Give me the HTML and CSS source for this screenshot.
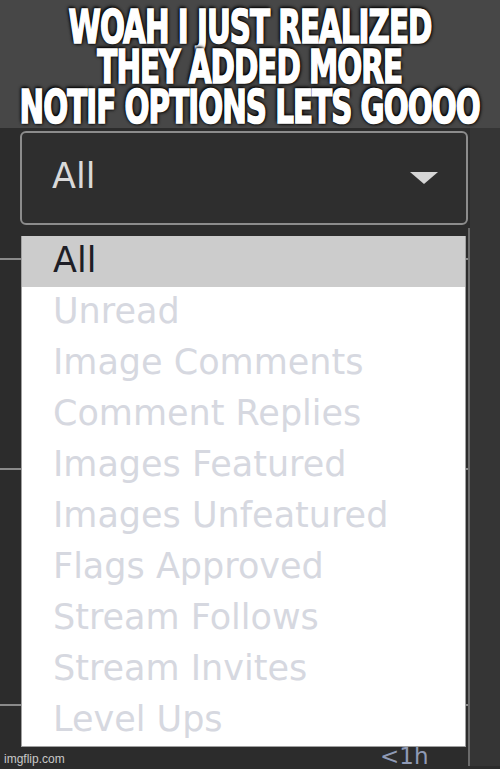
FILE: index.html
```html
<!DOCTYPE html>
<html lang="en">
<head>
    <meta charset="UTF-8" />
    <title>Notifications</title>
    <link rel="stylesheet" href="styles.css">
</head>
<body>
<header class="caption">
    <div class="caption-line"><span>WOAH I JUST REALIZED</span></div>
    <div class="caption-line"><span>THEY ADDED MORE</span></div>
    <div class="caption-line"><span>NOTIF OPTIONS LETS GOOOO</span></div>
</header>

<main class="page">
    <div class="filter-wrap">
        <div class="filter">
            <span class="filter-value">All</span>
            <svg class="filter-arrow" width="28" height="12" viewBox="0 0 28 12">
                <path d="M0 0 L28 0 L14 12 Z" fill="#d6d6d6"/>
            </svg>
        </div>
    </div>

    <div class="feed">
        <div class="feed-row" style="height:30px"></div>
        <div class="feed-row" style="height:208px"></div>
        <div class="feed-row" style="height:234px"></div>
        <div class="feed-row last">
            <span class="feed-time">&lt;1h</span>
        </div>
    </div>

    <ul class="menu">
        <li class="selected">All</li>
        <li>Unread</li>
        <li>Image Comments</li>
        <li>Comment Replies</li>
        <li>Images Featured</li>
        <li>Images Unfeatured</li>
        <li>Flags Approved</li>
        <li>Stream Follows</li>
        <li>Stream Invites</li>
        <li>Level Ups</li>
    </ul>
</main>

<div class="watermark">imgflip.com</div>
</body>
</html>
```

FILE: styles.css
```css
body {
    margin: 0;
    background: #2c2c2c;
    font-family: "DejaVu Sans", sans-serif;
    width: 500px;
    height: 769px;
    overflow: hidden;
    position: relative;
}

.caption {
    background: #474747;
    height: 128px;
    padding-top: 6px;
    box-sizing: border-box;
    font-family: "DejaVu Sans Condensed", "DejaVu Sans", sans-serif;
    font-stretch: condensed;
    font-weight: bold;
    font-size: 34px;
    letter-spacing: -1px;
    line-height: 40px;
    color: #fff;
    text-shadow: 0 0 2px #000, 0 0 3px #000, 1px 1px 3px #000, -1px -1px 3px #000;
}

.caption-line {
    display: flex;
    justify-content: center;
    align-items: center;
    white-space: nowrap;
    height: 40px;
}

.caption-line span {
    display: inline-block;
    line-height: 28px;
    transform: scale(0.96, 1.38);
    -webkit-text-stroke: 1.2px #fff;
}

.page {
    position: relative;
    display: grid;
    grid-template-columns: 470px 30px;
    background: linear-gradient(to right, #2c2c2c 470px, #353535 470px);
}

.filter-wrap {
    grid-column: 1 / 3;
    padding: 3px 32px 0 20px;
}

.filter {
    height: 94px;
    box-sizing: border-box;
    border: 2px solid #8c8c8c;
    border-radius: 6px;
    background: #2e2e2e;
    display: flex;
    align-items: center;
    justify-content: space-between;
    padding: 0 28px 0 30px;
}

.filter-value {
    font-size: 35px;
    color: #d9d9d9;
    padding-bottom: 4px;
}

.filter-arrow {
    display: block;
}

.feed {
    grid-column: 1;
    border-right: 2px solid #6a6a6a;
    margin-top: 3px;
    height: 538px;
    overflow: hidden;
}

.feed-row {
    border-bottom: 2px solid #8a8a8a;
    position: relative;
}

.feed-row.last {
    border-bottom: none;
    height: 60px;
}

.feed-time {
    position: absolute;
    top: 40px;
    left: 380px;
    font-size: 23px;
    line-height: 20px;
    color: #8f9ab5;
}

.menu {
    position: absolute;
    top: 108px;
    left: 21px;
    width: 445px;
    margin: 0;
    padding: 0;
    list-style: none;
    background: #fff;
    border: 1px solid #a0a0a0;
    border-top: none;
    box-sizing: border-box;
}

.menu li {
    height: 51px;
    line-height: 48px;
    padding-left: 31px;
    font-size: 35px;
    color: #d6d8e0;
    white-space: nowrap;
}

.menu li.selected {
    background: #cccccc;
    color: #1e1e26;
}

.watermark {
    position: absolute;
    left: 4px;
    bottom: 3px;
    font-family: "Liberation Sans", sans-serif;
    font-size: 12px;
    color: #c8c8c8;
}
```
